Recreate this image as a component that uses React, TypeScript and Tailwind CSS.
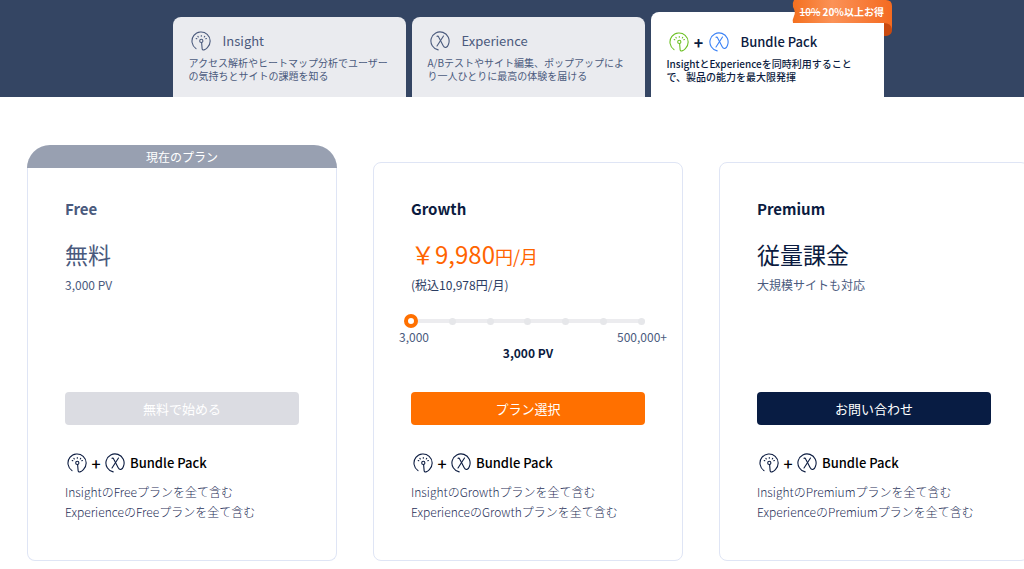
import { useState } from "react";

type IconProps = { className?: string };

function InsightIcon({ className = "" }: IconProps) {
  return (
    <svg viewBox="0 0 20 20" className={`size-5 shrink-0 ${className}`} fill="none" stroke="currentColor" strokeWidth="1.1" strokeLinecap="round" aria-hidden="true">
      <path d="M5 17.6A9.1 9.1 0 1 1 16.4 16.6C14.4 18.8 11.2 20.2 11.1 17.4L10.6 11.5" />
      <circle cx="10.3" cy="9.9" r="1.6" />
      <path d="M10.3 4.6v.7M6.9 5.4l.4.6M13.7 5.4l-.4.6M5.2 7.5l.6.3M15.4 7.5l-.6.3" />
    </svg>
  );
}

function ExperienceIcon({ className = "" }: IconProps) {
  return (
    <svg viewBox="0 0 20 20" className={`size-5 shrink-0 ${className}`} fill="none" stroke="currentColor" strokeWidth="1.1" strokeLinecap="round" aria-hidden="true">
      <path d="M8.2 18.9A9.1 9.1 0 1 1 18.4 13.5C17.4 16.8 14.6 17.5 13.2 14.8L8.8 6.2C8.4 5.3 7.8 5 6.9 5.2" />
      <path d="M13.5 5L7 15" />
    </svg>
  );
}

function Ribbon() {
  return (
    <span className="absolute -top-3 -right-2 block h-9 w-[100px]">
      <svg viewBox="0 0 100 36" className="absolute inset-0 size-full" aria-hidden="true">
        <defs>
          <linearGradient id="ribbon" x1="0" x2="1" y1="0" y2="0">
            <stop offset="0" stopColor="#f4701f" />
            <stop offset="0.4" stopColor="#fb9257" />
            <stop offset="1" stopColor="#f46a20" />
          </linearGradient>
        </defs>
        <path d="M92 36V22H100V30C100 34 97 36 92 36Z" fill="#c94a10" />
        <path d="M2 0H94Q100 0 100 6V29Q99 23 92 23H1Q0 20 2 16Q4 12 1 7Q0 3 2 0Z" fill="url(#ribbon)" />
      </svg>
      <span className="relative block pl-2 text-[10px] leading-[23px] whitespace-nowrap text-white">
        <s className="font-medium">10%</s> <b className="font-bold">20%以上お得</b>
      </span>
    </span>
  );
}

const tabs = [
  { id: "insight", title: "Insight", text: "アクセス解析やヒートマップ分析でユーザーの気持ちとサイトの課題を知る" },
  { id: "experience", title: "Experience", text: "A/Bテストやサイト編集、ポップアップにより一人ひとりに最高の体験を届ける" },
  { id: "bundle", title: "Bundle Pack", text: "InsightとExperienceを同時利用することで、製品の能力を最大限発揮" },
];

function ProductTabs() {
  const [active, setActive] = useState("bundle");
  return (
    <header className="flex items-end justify-center gap-1.5 bg-[#344563] pt-3 pl-8" role="tablist">
      {tabs.map((tab) => {
        const selected = tab.id === active;
        return (
          <button
            key={tab.id}
            type="button"
            role="tab"
            aria-selected={selected}
            onClick={() => setActive(tab.id)}
            className={`relative flex w-[233px] flex-col items-start rounded-t-lg px-4 text-left ${
              selected ? "bg-white pt-5 pb-3.5 font-medium text-[#0b1b40]" : "bg-[#eaebef] pt-3.5 pb-[15px] text-[#4a5a7d]"
            }`}
          >
            <span className="flex items-center gap-3 pl-0.5 text-[13px] leading-5">
              {tab.id === "insight" && <InsightIcon />}
              {tab.id === "experience" && <ExperienceIcon />}
              {tab.id === "bundle" && (
                <span className="flex items-center gap-1">
                  <InsightIcon className="text-[#6cc024]" />
                  <span className="w-3 text-center text-base leading-5 font-bold">+</span>
                  <ExperienceIcon className="text-[#3b82f6]" />
                </span>
              )}
              {tab.title}
            </span>
            <span className="mt-[5px] text-[10px] leading-[13px]">{tab.text}</span>
            {tab.id === "bundle" && <Ribbon />}
          </button>
        );
      })}
    </header>
  );
}

const steps = ["3,000", "10,000", "50,000", "100,000", "200,000", "300,000", "500,000+"];

function VolumeSlider() {
  const [step, setStep] = useState(0);
  return (
    <div className="mt-[18px]">
      <div className="relative -mx-[7px] flex h-4 items-center">
        <div className="absolute inset-x-[7px] flex h-1 items-center justify-between rounded-full bg-[#ececef]" aria-hidden="true">
          {steps.map((label) => (
            <i key={label} className="size-[7px] rounded-full bg-[#e6e7ea]" />
          ))}
        </div>
        <input
          type="range"
          min={0}
          max={steps.length - 1}
          value={step}
          onChange={(e) => setStep(Number(e.target.value))}
          aria-label="PV"
          className="relative h-4 w-full cursor-pointer appearance-none bg-transparent [&::-webkit-slider-thumb]:size-3.5 [&::-webkit-slider-thumb]:appearance-none [&::-webkit-slider-thumb]:rounded-full [&::-webkit-slider-thumb]:border-4 [&::-webkit-slider-thumb]:border-[#ff7000] [&::-webkit-slider-thumb]:bg-white"
        />
      </div>
      <div className="-mr-[22px] -ml-3 flex justify-between text-xs leading-4 text-[#4a5a7d]">
        <span>3,000</span>
        <span>500,000+</span>
      </div>
      <output className="block text-center text-xs leading-4 font-bold text-[#0b1b40]">{steps[step]} PV</output>
    </div>
  );
}

type Plan = {
  name: string;
  action: string;
  current?: boolean;
  button: string;
};

const plans: Plan[] = [
  { name: "Free", action: "無料で始める", current: true, button: "bg-[#dbdce2]" },
  { name: "Growth", action: "プラン選択", button: "bg-[#ff7000]" },
  { name: "Premium", action: "お問い合わせ", button: "bg-[#081c43]" },
];

function Price({ name }: { name: string }) {
  if (name === "Growth") {
    return (
      <>
        <p className="text-2xl leading-9 text-[#ff6400]">
          ￥9,980<span className="text-lg leading-6">円/月</span>
        </p>
        <p className="mt-[3px] text-xs leading-5 text-[#2b3c62]">(税込10,978円/月)</p>
        <VolumeSlider />
      </>
    );
  }
  return (
    <>
      <p className={`text-[23px] leading-9 ${name === "Premium" ? "text-[#0b1b40]" : "text-[#4a5a7d]"}`}>
        {name === "Premium" ? "従量課金" : "無料"}
      </p>
      <p className="mt-[3px] text-xs leading-5 text-[#4a5a7d]">{name === "Premium" ? "大規模サイトも対応" : "3,000 PV"}</p>
    </>
  );
}

function PlanCard({ plan }: { plan: Plan }) {
  return (
    <article className="w-[310px] shrink-0">
      {plan.current && (
        <p className="rounded-t-3xl bg-[#98a0b1] text-center text-xs leading-[23px] text-white">現在のプラン</p>
      )}
      <div
        className={`rounded-b-lg border border-[#dfe5f5] px-[37px] pb-[38px] ${
          plan.current ? "border-t-0 pt-[27px]" : "rounded-t-lg pt-8"
        }`}
      >
        <h2 className={`text-[15px] leading-7 font-bold ${plan.current ? "text-[#4a5a7d]" : "text-[#0b1b40]"}`}>{plan.name}</h2>
        <div className="mt-[13px] h-[156px]">
          <Price name={plan.name} />
        </div>
        <button type="button" disabled={plan.current} className={`block h-[33px] w-full rounded text-[13px] text-white ${plan.button}`}>
          {plan.action}
        </button>
        <h3 className="mt-7 flex items-center pl-0.5 text-[13px] leading-5 font-medium text-black">
          <InsightIcon className="text-[#0b1b40]" />
          <span className="w-[18px] text-center text-base leading-5">+</span>
          <ExperienceIcon className="mr-[5px] text-[#0b1b40]" />
          Bundle Pack
        </h3>
        <ul className="mt-[9px] text-xs leading-5 font-light text-[#1f3058]">
          <li>Insightの{plan.name}プランを全て含む</li>
          <li>Experienceの{plan.name}プランを全て含む</li>
        </ul>
      </div>
    </article>
  );
}

export default function App() {
  return (
    <div className="min-h-screen bg-white font-['Noto_Sans_CJK_JP',sans-serif]">
      <ProductTabs />
      <main className="flex items-end gap-9 overflow-x-auto pt-12 pb-2 pl-[27px] [scrollbar-width:none]">
        {plans.map((plan) => (
          <PlanCard key={plan.name} plan={plan} />
        ))}
      </main>
    </div>
  );
}
